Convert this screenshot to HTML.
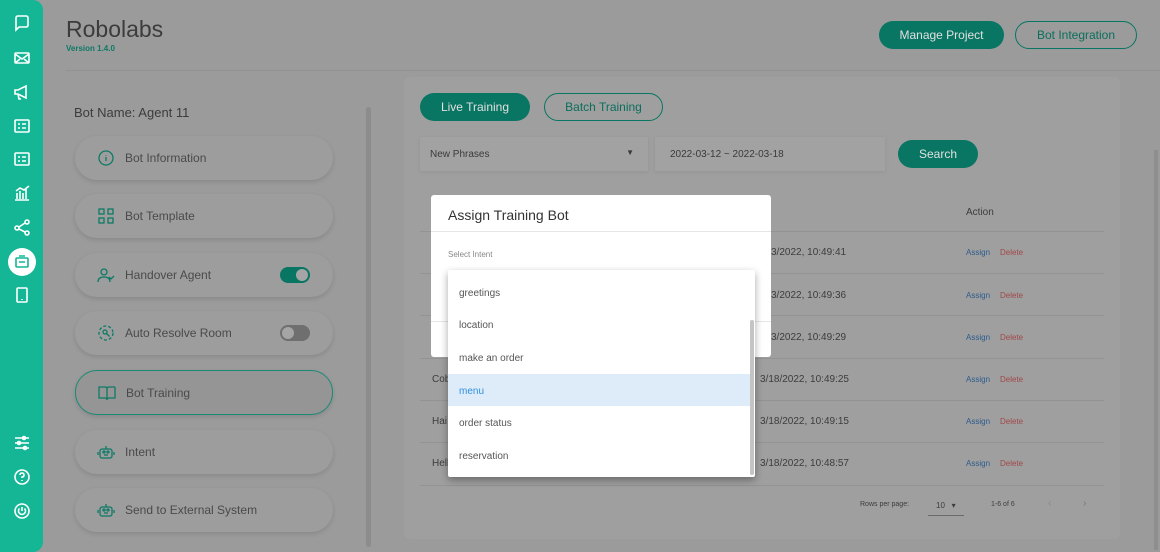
<!DOCTYPE html>
<html><head><style>
*{box-sizing:border-box;margin:0;padding:0}
body{width:1160px;height:552px;overflow:hidden;background:#9b9b9b;font-family:"Liberation Sans",sans-serif;position:relative;color:#444}
.side{position:absolute;left:0;top:0;width:43px;height:552px;background:#15b696;border-radius:0 10px 10px 0}
.ic{position:absolute;left:13px;width:18px;height:18px}
.ic svg{width:18px;height:18px;stroke:#fff;fill:none;stroke-width:1.6}
.act{position:absolute;left:8px;top:248px;width:28px;height:28px;border-radius:50%;background:#fff}
h1{position:absolute;left:66px;top:16px;font-size:23px;font-weight:normal;color:#3c3c3c}
.ver{position:absolute;left:66px;top:44px;font-size:8px;color:#0d7a66;font-weight:bold}
.hline{position:absolute;left:66px;top:70px;width:1094px;height:1px;background:#929292}
.btn{position:absolute;border-radius:15px;font-size:12px;text-align:center;color:#e0e0e0}
.f{background:#097563}
.o{border:1px solid #097563;color:#0b6e5c}
.lp{position:absolute;left:75px;font-size:12px;color:#4a4a4a;width:258px;height:44px;border-radius:22px;background:#9d9d9d;box-shadow:0 2px 5px rgba(0,0,0,.12)}
.lp span{position:absolute;left:50px;top:15px}
.lp svg{position:absolute;left:22px;top:13px;width:18px;height:18px;stroke:#0d7a66;fill:none;stroke-width:1.3}
.tg{position:absolute;left:205px;top:14px;width:30px;height:16px;border-radius:8px}
.tg i{position:absolute;top:2px;width:12px;height:12px;border-radius:50%;background:#a5a5a5}
.card{position:absolute;left:404px;top:77px;width:716px;height:462px;background:#9f9f9f;border-radius:6px}
.fld{position:absolute;top:137px;height:34px;background:#a2a2a2;font-size:10px;color:#3a3a3a;padding:12px 10px;box-shadow:0 1px 4px rgba(0,0,0,.08)}
.row{position:absolute;left:420px;width:684px;height:1px;background:#939393}
.t{position:absolute;font-size:10px;color:#3c3c3c}
.as{position:absolute;left:966px;font-size:8px;color:#2b5c8e}
.de{position:absolute;left:1000px;font-size:8px;color:#a0484a}
.modal{position:absolute;left:431px;top:195px;width:340px;height:162px;background:#fff;border-radius:3px}
.dd{position:absolute;left:448px;top:270px;width:307px;height:207px;background:#fff;box-shadow:0 3px 8px rgba(0,0,0,.35);border-radius:2px}
.dd div{position:absolute;left:0;width:302px;height:32px;font-size:10px;color:#555;padding:12px 11px 0}
</style></head><body>
<div class="side"></div>
<div class="ic" style="top:14px"><svg viewBox="0 0 18 18"><path d="M3 4q0-2 2-2h8q2 0 2 2v7q0 2-2 2H6l-3 3z"/></svg></div>
<div class="ic" style="top:49px"><svg viewBox="0 0 18 18"><rect x="2" y="4" width="14" height="10" rx="1"/><path d="M2 5l7 5 7-5M2 14l5-4M16 14l-5-4"/></svg></div>
<div class="ic" style="top:83px"><svg viewBox="0 0 18 18"><path d="M2 7h3l8-4v12l-8-4H2zM5 11l1 5h2"/></svg></div>
<div class="ic" style="top:117px"><svg viewBox="0 0 18 18"><rect x="2" y="3" width="14" height="12" rx="1"/><path d="M5 7h2M5 11h2M9 7h4M9 11h4"/></svg></div>
<div class="ic" style="top:150px"><svg viewBox="0 0 18 18"><rect x="2" y="3" width="14" height="12" rx="1"/><path d="M5 7h2M5 11h2M9 7h4M9 11h4"/></svg></div>
<div class="ic" style="top:184px"><svg viewBox="0 0 18 18"><path d="M2 16h14M4 15V9M7 15V7M10 15V9M13 15V5M3 7l4-3 4 2 5-4"/></svg></div>
<div class="ic" style="top:218px"><svg viewBox="0 0 18 18"><circle cx="4" cy="10" r="2"/><circle cx="14" cy="4" r="2"/><circle cx="14" cy="15" r="2"/><path d="M6 9l6-4M6 11l6 3"/></svg></div>
<div class="act"></div>
<div class="ic" style="top:253px;left:13px"><svg viewBox="0 0 18 18" style="stroke:#15b696"><rect x="3" y="5" width="12" height="9" rx="1"/><path d="M6 3h6M6 9h6"/></svg></div>
<div class="ic" style="top:286px"><svg viewBox="0 0 18 18"><rect x="4" y="2" width="10" height="14" rx="1"/><path d="M9 13v1"/></svg></div>
<div class="ic" style="top:434px"><svg viewBox="0 0 18 18"><path d="M2 4h14M2 9h14M2 14h14"/><circle cx="11" cy="4" r="1.5"/><circle cx="6" cy="9" r="1.5"/><circle cx="12" cy="14" r="1.5"/></svg></div>
<div class="ic" style="top:468px"><svg viewBox="0 0 18 18"><circle cx="9" cy="9" r="7"/><path d="M7 7q0-2 2-2t2 2-2 2v1M9 12v1"/></svg></div>
<div class="ic" style="top:502px"><svg viewBox="0 0 18 18"><circle cx="9" cy="9" r="7"/><path d="M9 5v4M6.5 6.5a3.5 3.5 0 1 0 5 0"/></svg></div>

<h1>Robolabs</h1><div class="ver">Version 1.4.0</div>
<div class="hline"></div>
<div class="btn f" style="left:879px;top:21px;width:125px;height:28px;line-height:28px">Manage Project</div>
<div class="btn o" style="left:1015px;top:21px;width:122px;height:28px;line-height:26px">Bot Integration</div>

<div style="position:absolute;left:366px;top:107px;width:5px;height:440px;background:#8c8c8c;border-radius:3px"></div>
<div style="position:absolute;left:74px;top:105px;font-size:13px;color:#3c3c3c">Bot Name: Agent 11</div>
<div class="lp" style="top:136px"><svg viewBox="0 0 18 18"><circle cx="9" cy="9" r="7"/><path d="M9 8v4M9 6v.5"/></svg><span>Bot Information</span></div>
<div class="lp" style="top:194px"><svg viewBox="0 0 18 18"><rect x="2" y="2" width="5" height="5"/><rect x="11" y="2" width="5" height="5"/><rect x="2" y="11" width="5" height="5"/><rect x="11" y="11" width="5" height="5"/></svg><span>Bot Template</span></div>
<div class="lp" style="top:253px"><svg viewBox="0 0 18 18"><circle cx="7" cy="6" r="3"/><path d="M1 16q0-5 6-5t6 5M12 11l2 2 3-3"/></svg><span>Handover Agent</span><div class="tg" style="background:#097563"><i style="right:2px"></i></div></div>
<div class="lp" style="top:311px"><svg viewBox="0 0 18 18"><circle cx="9" cy="9" r="7" stroke-dasharray="3 2"/><circle cx="8" cy="8" r="2"/><path d="M9.5 9.5l3 3"/></svg><span>Auto Resolve Room</span><div class="tg" style="background:#6f6f6f"><i style="left:2px"></i></div></div>
<div class="lp" style="top:370px;height:45px;border:1px solid #1a8a74;background:#959595"><svg viewBox="0 0 18 18"><path d="M1 3h6q2 0 2 2v11q0-2-2-2H1zM17 3h-6q-2 0-2 2M17 3v11h-6q-2 0-2 2"/></svg><span>Bot Training</span></div>
<div class="lp" style="top:430px"><svg viewBox="0 0 18 18"><rect x="3" y="6" width="12" height="9" rx="2"/><path d="M9 6V3M1 9v3M17 9v3M7 12h4"/><circle cx="7" cy="9" r="1"/><circle cx="11" cy="9" r="1"/></svg><span>Intent</span></div>
<div class="lp" style="top:488px"><svg viewBox="0 0 18 18"><rect x="3" y="6" width="12" height="9" rx="2"/><path d="M9 6V3M1 9v3M17 9v3M7 12h4"/><circle cx="7" cy="9" r="1"/><circle cx="11" cy="9" r="1"/></svg><span>Send to External System</span></div>

<div class="card"></div>
<div style="position:absolute;left:1154px;top:150px;width:4px;height:400px;background:#8e8e8e"></div>
<div class="btn f" style="left:420px;top:93px;width:110px;height:28px;line-height:28px">Live Training</div>
<div class="btn o" style="left:544px;top:93px;width:119px;height:28px;line-height:26px">Batch Training</div>
<div class="fld" style="left:420px;width:228px">New Phrases<span style="position:absolute;right:14px;top:11px;font-size:8px">▼</span></div>
<div class="fld" style="left:655px;width:230px;padding-left:15px">2022-03-12 ~ 2022-03-18</div>
<div class="btn f" style="left:898px;top:140px;width:80px;height:28px;line-height:28px">Search</div>
<div class="t" style="left:966px;top:207px">Action</div>
<div class="row" style="top:231px"></div><div class="row" style="top:273px"></div><div class="row" style="top:315px"></div><div class="row" style="top:358px"></div><div class="row" style="top:400px"></div><div class="row" style="top:442px"></div><div class="row" style="top:485px"></div>
<div class="t" style="left:771px;top:247px">3/2022, 10:49:41</div>
<div class="t" style="left:771px;top:290px">3/2022, 10:49:36</div>
<div class="t" style="left:771px;top:332px">3/2022, 10:49:29</div>
<div class="t" style="left:432px;top:374px">Cob</div><div class="t" style="left:760px;top:374px">3/18/2022, 10:49:25</div>
<div class="t" style="left:432px;top:416px">Hai</div><div class="t" style="left:760px;top:416px">3/18/2022, 10:49:15</div>
<div class="t" style="left:432px;top:458px">Hell</div><div class="t" style="left:760px;top:458px">3/18/2022, 10:48:57</div>
<div class="as" style="top:248px">Assign</div><div class="de" style="top:248px">Delete</div>
<div class="as" style="top:291px">Assign</div><div class="de" style="top:291px">Delete</div>
<div class="as" style="top:333px">Assign</div><div class="de" style="top:333px">Delete</div>
<div class="as" style="top:375px">Assign</div><div class="de" style="top:375px">Delete</div>
<div class="as" style="top:417px">Assign</div><div class="de" style="top:417px">Delete</div>
<div class="as" style="top:459px">Assign</div><div class="de" style="top:459px">Delete</div>
<div class="t" style="left:860px;top:501px;font-size:7px">Rows per page:</div>
<div class="t" style="left:936px;top:501px;font-size:8px">10 &nbsp;&nbsp;▾</div>
<div style="position:absolute;left:928px;top:515px;width:36px;height:1px;background:#6a6a6a"></div>
<div class="t" style="left:991px;top:501px;font-size:7px">1-6 of 6</div>
<div class="t" style="left:1048px;top:498px;color:#888">‹</div><div class="t" style="left:1083px;top:498px;color:#777">›</div>

<div class="modal">
<div style="position:absolute;left:17px;top:12px;font-size:14px;color:#333">Assign Training Bot</div>
<div style="position:absolute;left:0;top:36px;width:340px;height:1px;background:#e6e6e6"></div>
<div style="position:absolute;left:17px;top:55px;font-size:8px;color:#888">Select Intent</div>
<div style="position:absolute;left:0;top:126px;width:340px;height:1px;background:#e6e6e6"></div>
</div>
<div class="dd">
<div style="top:6px">greetings</div>
<div style="top:38px">location</div>
<div style="top:71px">make an order</div>
<div style="top:104px;background:#deecf9;color:#2f8fe0">menu</div>
<div style="top:136px">order status</div>
<div style="top:169px">reservation</div>
<span style="position:absolute;right:1px;top:50px;width:4px;height:155px;background:#c4c4c4;border-radius:2px"></span>
</div>
</body></html>
